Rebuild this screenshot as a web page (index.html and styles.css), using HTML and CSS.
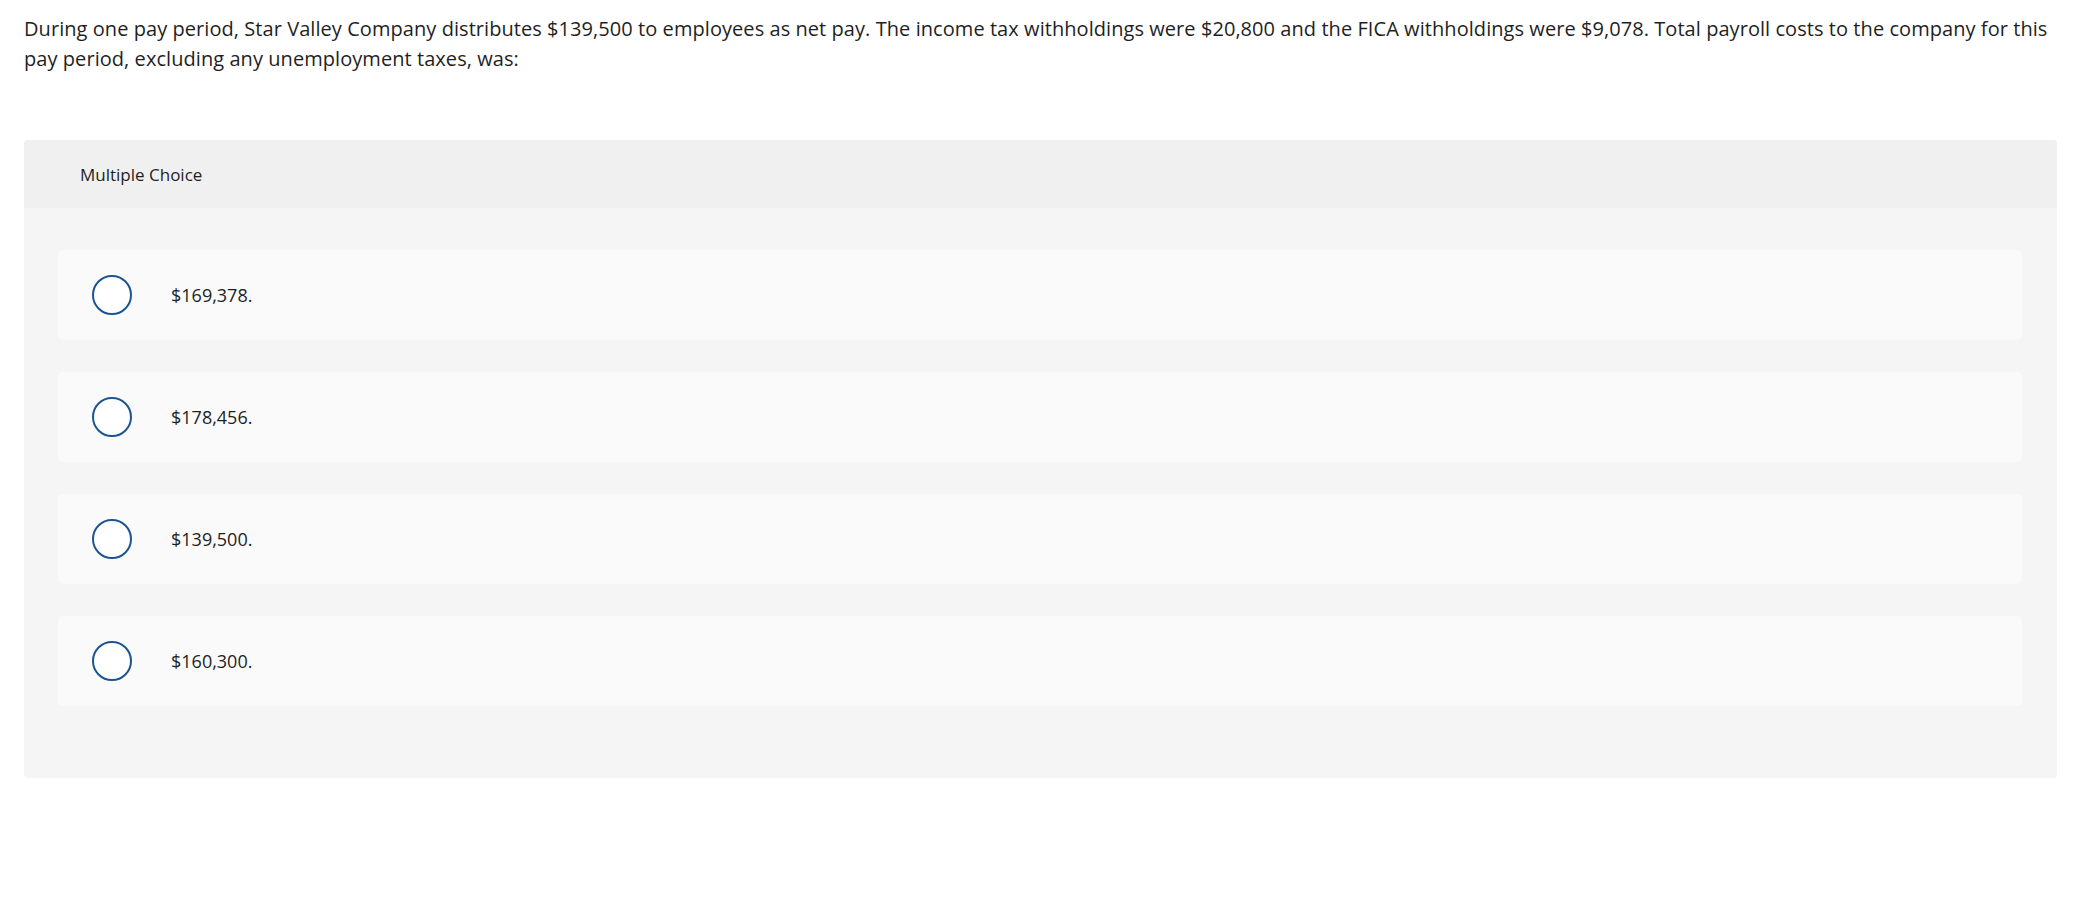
FILE: index.html
```html
<!DOCTYPE html>
<html lang="en">
<head>
<meta charset="utf-8">
<title>Multiple Choice</title>
<link rel="stylesheet" href="styles.css">
</head>
<body>
<main class="page">
  <p class="question">During one pay period, Star Valley Company distributes $139,500 to employees as net pay. The income tax withholdings were $20,800 and the FICA withholdings were $9,078. Total payroll costs to the company for this pay period, excluding any unemployment taxes, was:</p>
  <section class="mc">
    <div class="mc-head">Multiple Choice</div>
    <div class="mc-body">
      <label class="option"><span class="radio"></span><span class="option-text">$169,378.</span></label>
      <label class="option"><span class="radio"></span><span class="option-text">$178,456.</span></label>
      <label class="option"><span class="radio"></span><span class="option-text">$139,500.</span></label>
      <label class="option"><span class="radio"></span><span class="option-text">$160,300.</span></label>
    </div>
  </section>
</main>
</body>
</html>
```
FILE: styles.css
```css
html, body {
  margin: 0;
  padding: 0;
  background: #ffffff;
}
body {
  font-family: "Open Sans", "Lato", "Liberation Sans", sans-serif;
  color: #1f1f1f;
}
.page {
  padding: 14px 43px 0 24px;
}
.question {
  margin: 0 0 66px;
  font-size: 20px;
  line-height: 30px;
  letter-spacing: 0.06px;
}
.mc {
  background: #f5f5f5;
  border-radius: 4px;
  overflow: hidden;
}
.mc-head {
  height: 68px;
  display: flex;
  align-items: center;
  padding-left: 56px;
  background: #f0f0f0;
  font-size: 17px;
}
.mc-body {
  display: flex;
  flex-direction: column;
  gap: 32px;
  padding: 42px 35px 72px 34px;
}
.option {
  height: 90px;
  display: flex;
  align-items: center;
  padding-left: 34px;
  background: #fafafa;
  border-radius: 5px;
}
.radio {
  width: 36px;
  height: 36px;
  border: 2px solid #1c558f;
  border-radius: 50%;
  background: #ffffff;
  flex-shrink: 0;
}
.option-text {
  margin-left: 39px;
  font-size: 18px;
}
```
